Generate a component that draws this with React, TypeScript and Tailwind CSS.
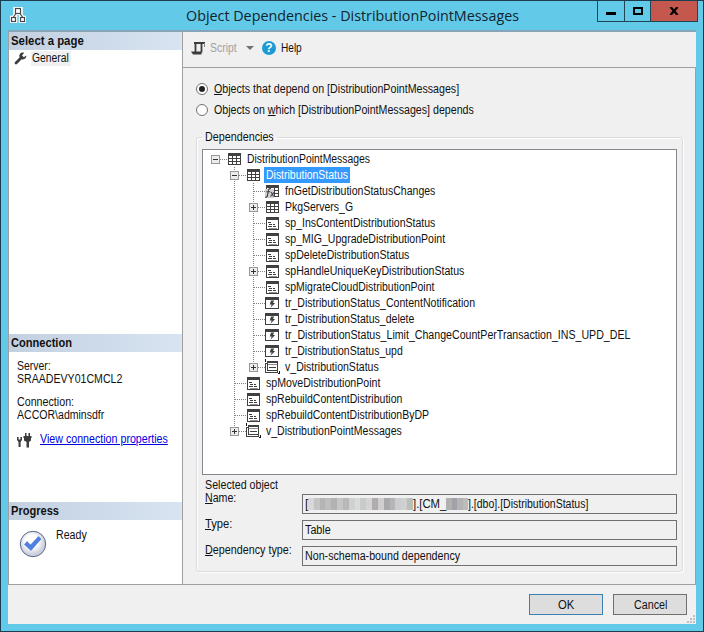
import { useLayoutEffect, useRef, useState } from 'react';
import type { ReactNode } from 'react';

type FitProps = { w: number; className?: string; children: ReactNode };

// One line of text condensed horizontally so that it fills exactly w pixels.
function Fit({ w, className = '', children }: FitProps) {
  const ref = useRef<HTMLSpanElement>(null);
  const [scale, setScale] = useState(1);
  useLayoutEffect(() => {
    const el = ref.current;
    if (el) setScale(w / el.offsetWidth);
  }, [w]);
  return (
    <span className={'flex shrink-0 whitespace-nowrap ' + className} style={{ width: w }}>
      <span ref={ref} className="block shrink-0 origin-left" style={{ transform: `scaleX(${scale})` }}>
        {children}
      </span>
    </span>
  );
}

type Kind = 'table' | 'fn' | 'proc' | 'trigger' | 'view';

function NodeIcon({ kind }: { kind: Kind }) {
  const c = '#404040';
  if (kind === 'table' || kind === 'fn') {
    return (
      <svg width="16" height="16" viewBox="0 0 16 16" className="shrink-0" shapeRendering="crispEdges">
        <rect x="1" y="2" width="13" height="12" fill={c} />
        <g fill="#fff">
          {[5, 8, 11].map((y) => [2, 6, 10].map((x) => <rect key={x + '-' + y} x={x} y={y} width="3" height="2" />))}
        </g>
        {kind === 'fn' && (
          <g shapeRendering="auto">
            <rect x="0" y="6" width="9" height="9" fill="#d0d0d0" />
            <path d="M5.800 5.600c-1.400-.5-2 .3-2.300 1.900L2.400 12.600c-.2 1.300-1 1.800-2.200 1.300M1.400 8.700h3.800M5.800 9.200c1.700 0 1.300 4.300 3.400 4.300M9.400 9.200L5.500 13.500" fill="none" stroke={c} strokeWidth="1.100" />
          </g>
        )}
      </svg>
    );
  }
  if (kind === 'proc') {
    return (
      <svg width="16" height="16" viewBox="0 0 16 16" className="shrink-0" shapeRendering="crispEdges">
        <rect x="1" y="2" width="13" height="13" fill={c} />
        <rect x="2" y="5" width="11" height="9" fill="#fff" />
        <path d="M3 7.500h3M4 9.500h3M8 9.500h2M3 11.500h4M8 11.500h3" stroke={c} />
        <path d="M4 13.500h8" stroke="#909090" />
      </svg>
    );
  }
  if (kind === 'trigger') {
    return (
      <svg width="16" height="16" viewBox="0 0 16 16" className="shrink-0" shapeRendering="crispEdges">
        <rect x="0" y="2" width="14" height="12" fill={c} />
        <rect x="1" y="5" width="12" height="8" fill="#fff" />
        <path d="M6 5.500h3.200L8 8h2.200L5.400 12.700 6.700 9.400H4.700z" fill={c} shapeRendering="auto" />
      </svg>
    );
  }
  return (
    <svg width="16" height="16" viewBox="0 0 16 16" className="shrink-0" shapeRendering="crispEdges">
      <path d="M.5 0v3M14.500 12v3M13 14.500h2" stroke="#111" />
      <rect x=".5" y="4.500" width="12" height="9" fill="#fff" stroke={c} />
      <rect x="2.500" y="2.500" width="10" height="9" fill="#fff" stroke={c} />
      <path d="M2 3.500h11M4 8.500h7" stroke={c} />
      <path d="M3 5.500h9" stroke="#8c8c8c" />
    </svg>
  );
}

type GuideProps = { up?: boolean; down?: boolean; across?: boolean; box?: '+' | '-' };

// One 19px indent column: dotted connectors and the optional expander.
function Guide({ up, down, across, box }: GuideProps) {
  return (
    <svg width="19" height="16" viewBox="0 0 19 16" className="shrink-0 overflow-visible" shapeRendering="crispEdges">
      <g stroke="#808080" strokeDasharray="1 1">
        {up && <path d="M9.500 0v8" />}
        {down && <path d="M9.500 8v8" />}
        {across && <path d="M10 8.500h11" />}
      </g>
      {box && (
        <>
          <rect x="5.500" y="4.500" width="8" height="8" fill="#ececec" stroke="#989898" />
          <path d="M7 8.500h5" stroke="#333" />
          {box === '+' && <path d="M9.500 6v5" stroke="#333" />}
        </>
      )}
    </svg>
  );
}

type Row = { name: string; w: number; kind: Kind; depth: number; box?: '+' | '-'; last?: boolean; selected?: boolean };

const rows: Row[] = [
  { name: 'DistributionPointMessages', w: 123, kind: 'table', depth: 0, box: '-', last: true },
  { name: 'DistributionStatus', w: 82, kind: 'table', depth: 1, box: '-', selected: true },
  { name: 'fnGetDistributionStatusChanges', w: 150, kind: 'fn', depth: 2 },
  { name: 'PkgServers_G', w: 68, kind: 'table', depth: 2, box: '+' },
  { name: 'sp_InsContentDistributionStatus', w: 150, kind: 'proc', depth: 2 },
  { name: 'sp_MIG_UpgradeDistributionPoint', w: 160, kind: 'proc', depth: 2 },
  { name: 'spDeleteDistributionStatus', w: 124, kind: 'proc', depth: 2 },
  { name: 'spHandleUniqueKeyDistributionStatus', w: 179, kind: 'proc', depth: 2, box: '+' },
  { name: 'spMigrateCloudDistributionPoint', w: 149, kind: 'proc', depth: 2 },
  { name: 'tr_DistributionStatus_ContentNotification', w: 190, kind: 'trigger', depth: 2 },
  { name: 'tr_DistributionStatus_delete', w: 129, kind: 'trigger', depth: 2 },
  { name: 'tr_DistributionStatus_Limit_ChangeCountPerTransaction_INS_UPD_DEL', w: 345, kind: 'trigger', depth: 2 },
  { name: 'tr_DistributionStatus_upd', w: 118, kind: 'trigger', depth: 2 },
  { name: 'v_DistributionStatus', w: 94, kind: 'view', depth: 2, box: '+', last: true },
  { name: 'spMoveDistributionPoint', w: 114, kind: 'proc', depth: 1 },
  { name: 'spRebuildContentDistribution', w: 136, kind: 'proc', depth: 1 },
  { name: 'spRebuildContentDistributionByDP', w: 163, kind: 'proc', depth: 1 },
  { name: 'v_DistributionPointMessages', w: 136, kind: 'view', depth: 1, box: '+', last: true },
];

function TreeRow({ row }: { row: Row }) {
  return (
    <div className="flex h-4 items-center">
      {row.depth > 0 && <Guide />}
      {row.depth > 1 && <Guide up={true} down={true} />}
      <Guide up={row.depth > 0} down={!row.last} across box={row.box} />
      <div className="ml-[2px] flex">
        <NodeIcon kind={row.kind} />
      </div>
      <div className={'ml-[2px] flex h-4 items-center px-[2px] ' + (row.selected ? 'bg-[#3399ff] text-white' : '')}>
        <Fit w={row.w} className="leading-4">{row.name}</Fit>
      </div>
    </div>
  );
}

function SideHeader({ title, w }: { title: string; w: number }) {
  return (
    <div className="h-[18px] shrink-0 bg-linear-to-r from-[#c3d0e0] to-[#d8e4f2] pl-[2px] font-bold leading-[18px]">
      <Fit w={w}>{title}</Fit>
    </div>
  );
}

function Radio({ checked }: { checked?: boolean }) {
  return (
    <div className="flex size-[12px] shrink-0 items-center justify-center rounded-full border border-[#707070] bg-white">
      {checked && <div className="size-[6px] rounded-full bg-[#222]" />}
    </div>
  );
}

function Field({ label, w, children }: { label: ReactNode; w: number; children: ReactNode }) {
  return (
    <div className="mb-[6px] flex h-5">
      <div className="-mt-[2px] w-[97px] leading-[13px]">
        <Fit w={w}>{label}</Fit>
      </div>
      <div className="flex h-5 w-[375px] items-center border border-[#707070] pl-[2px]">{children}</div>
    </div>
  );
}

const mosaicLong = ['#d8d8d8', '#c4c4c4', '#b4b4b6', '#bdbdbd', '#b0b2b4', '#c6c6c6', '#b8b8b8', '#d0d2d0', '#dadada', '#c8ccc8', '#d4d4d4', '#b0acb0', '#cfcfcf', '#a9a9ab', '#b5b5b5', '#cacccf', '#d0d0d0', '#b8c0b8'];
const mosaicShort = ['#b0b0b0', '#a4a2a8', '#b4b4b6', '#bcbcbc'];

function Mosaic({ colors, w }: { colors: string[]; w: number }) {
  return (
    <div className="flex h-3 shrink-0" style={{ width: w }}>
      {colors.map((c, i) => (
        <div key={i} className="flex-1" style={{ backgroundColor: c }} />
      ))}
    </div>
  );
}

export default function App() {
  return (
    <div className="flex h-[632px] w-[704px] flex-col overflow-hidden border border-[#1c3d50] bg-[#63c9e9] font-['Liberation_Sans',Arial,sans-serif] text-[12px] text-[#111]">
      <header className="flex h-[29px] shrink-0 items-start">
        <svg width="16" height="16" viewBox="0 0 16 16" className="ml-[9px] mt-[6px]">
          <g stroke="#fff" strokeWidth="3.500" fill="#fff">
            <rect x="5" y="1.500" width="6" height="5" />
            <rect x="1.500" y="10.500" width="4" height="4" />
            <rect x="10.500" y="10.500" width="4" height="4" />
            <path d="M6 6.500L3.500 10M10 6.500L12.500 10" />
          </g>
          <g stroke="#484848" strokeWidth="1.200" fill="#fff">
            <path d="M6 6.500L3.500 10M10 6.500L12.500 10" />
            <rect x="5.500" y="1.500" width="5" height="5" />
            <rect x="1.500" y="10.500" width="4" height="4" />
            <rect x="10.500" y="10.500" width="4" height="4" />
          </g>
        </svg>
        <div className="ml-[160px] mt-[4px] flex-1 font-['Open_Sans','Noto_Sans',sans-serif] text-[15px] leading-[21px] text-[#10242e]">
          <Fit w={333}>Object Dependencies - DistributionPointMessages</Fit>
        </div>
        <div className="mr-[5px] flex h-[21px] w-[101px] border border-t-0 border-[#1f4656]">
          <div className="flex w-[27px] items-center justify-center border-r border-[#1f4656] pt-1">
            <div className="h-[3px] w-[10px] bg-black" />
          </div>
          <div className="flex w-[26px] items-center justify-center border-r border-[#1f4656]">
            <div className="h-2 w-[10px] border-2 border-black" />
          </div>
          <div className="flex flex-1 items-center justify-center bg-[#c4584f]">
            <svg width="10" height="8" viewBox="0 0 10 8">
              <path d="M1.500 0L8.500 8M8.500 0L1.500 8" stroke="#000" strokeWidth="2.200" />
            </svg>
          </div>
        </div>
      </header>

      <div className="mx-[7px] flex h-[594px] shrink-0 flex-col border-t-2 border-[#86a5b8] bg-[#f0f0f0]">
        <div className="flex h-[553px] shrink-0 border-b border-[#a0a0a0]">
          <aside className="flex w-[175px] shrink-0 flex-col border-x border-[#a0a0a0] bg-white">
            <SideHeader title="Select a page" w={73} />
            <div className="flex h-[284px] items-start">
              <svg width="13" height="13" viewBox="0 0 13 13" className="ml-[5px] mt-[2px]">
                <path d="M2 11L7.500 5.500" stroke="#3c3c3c" strokeWidth="2.800" strokeLinecap="round" />
                <path d="M10.200.7A3.500 3.500 0 1 0 12.300 3.500L9.800 5.200 8 3.600z" fill="#3c3c3c" />
              </svg>
              <div className="ml-[4px] mt-px h-[15px] bg-[#f0f0f0] pl-px pr-[2px] leading-[15px]">
                <Fit w={37}>General</Fit>
              </div>
            </div>
            <SideHeader title="Connection" w={61} />
            <div className="flex h-[150px] flex-col items-start pl-2 pt-[8px] leading-[13px]">
              <Fit w={34}>Server:</Fit>
              <Fit w={105}>SRAADEVY01CMCL2</Fit>
              <Fit w={57} className="mt-[10px]">Connection:</Fit>
              <Fit w={87}>ACCOR\adminsdfr</Fit>
              <div className="mt-[9px] flex items-center">
                <svg width="15" height="15" viewBox="0 0 15 15" className="mt-[2px]">
                  <g fill="#3c3c3c">
                    <path d="M0 4h1.600v2.500h1.800V4H5v3L3.600 9v5H1.500V9L0 7z" />
                    <path d="M8 0h1.500v3h2V0H13v3h1.500v2H14v2.500L12 9v5.500H9.500V9L7 7.500V5h-.5V3H8z" />
                  </g>
                </svg>
                <Fit w={128} className="ml-2 text-[#0000e0] underline">View connection properties</Fit>
              </div>
            </div>
            <SideHeader title="Progress" w={48} />
            <div className="flex items-start pl-[10px] pt-[9px]">
              <svg width="28" height="28" viewBox="0 0 28 28" className="mt-px">
                <defs>
                  <radialGradient id="ball" cx="45%" cy="40%">
                    <stop offset="50%" stopColor="#fff" />
                    <stop offset="100%" stopColor="#cdd0de" />
                  </radialGradient>
                </defs>
                <circle cx="14" cy="14" r="12.700" fill="url(#ball)" stroke="#5c6a8e" />
                <path d="M5.500 14.500L8 11.500 11.500 15 19.500 6.500 22 9 12 20.500z" fill="#4f80e4" stroke="#3560bd" strokeWidth=".5" />
              </svg>
              <Fit w={31} className="ml-[9px] leading-[13px]">Ready</Fit>
            </div>
          </aside>

          <div className="flex flex-1 flex-col">
            <div className="flex h-[36px] shrink-0 items-center border-b border-[#a0a0a0] pb-[3px] pl-2">
              <svg width="15" height="15" viewBox="0 0 15 15">
                <path d="M3 2h11M4.500 2v9M10.500 3v8.500" fill="none" stroke="#3c3c3c" strokeWidth="1.800" />
                <path d="M0 10.500h10.500v3H2z" fill="#3c3c3c" />
                <path d="M13.500 2v4" stroke="#8a8a8a" />
              </svg>
              <Fit w={27} className="ml-[4px] text-[#a0a0a0]">Script</Fit>
              <div className="ml-[9px] border-x-4 border-t-4 border-x-transparent border-t-[#707070]" />
              <div className="ml-[8px] flex size-[14px] items-center justify-center rounded-full bg-[#1c9ad6] text-[12px] font-bold text-white">?</div>
              <Fit w={21} className="ml-[5px]">Help</Fit>
            </div>
            <div className="flex flex-1 flex-col border-r border-[#a0a0a0] pl-[13px]">
              <div className="mt-[14px] flex h-[13px] items-center">
                <Radio checked />
                <Fit w={245} className="ml-[6px]"><u>O</u>bjects that depend on [DistributionPointMessages]</Fit>
              </div>
              <div className="mt-[8px] flex h-[13px] items-center">
                <Radio />
                <Fit w={260} className="ml-[6px]">Objects on <u>w</u>hich [DistributionPointMessages] depends</Fit>
              </div>
              <fieldset className="mt-[15px] flex h-[441px] w-[487px] flex-col rounded-[3px] border border-[#dcdcdc] pl-[5px] shadow-[inset_1px_1px_0_#fff,1px_1px_0_#fff]">
                <legend className="h-[13px] px-[3px] leading-[13px]">
                  <Fit w={69}>Dependencies</Fit>
                </legend>
                <div className="mt-[5px] h-[326px] w-[475px] border border-[#828790] bg-white pl-[3px] pt-px">
                  {rows.map((row) => (
                    <TreeRow key={row.name} row={row} />
                  ))}
                </div>
                <div className="mt-[4px] pl-[3px]">
                  <div className="mb-[2px] h-[13px] leading-[13px]">
                    <Fit w={73}>Selected object</Fit>
                  </div>
                  <Field label={<><u>N</u>ame:</>} w={31}>
                    <Fit w={3}>[</Fit>
                    <Mosaic colors={mosaicLong} w={105} />
                    <Fit w={33}>].[CM_</Fit>
                    <Mosaic colors={mosaicShort} w={22} />
                    <Fit w={120}>].[dbo].[DistributionStatus]</Fit>
                  </Field>
                  <Field label={<><u>T</u>ype:</>} w={27}>
                    <Fit w={26}>Table</Fit>
                  </Field>
                  <Field label={<><u>D</u>ependency type:</>} w={87}>
                    <Fit w={155}>Non-schema-bound dependency</Fit>
                  </Field>
                </div>
              </fieldset>
            </div>
          </div>
        </div>

        <footer className="flex flex-1 items-start justify-end pt-[9px]">
          <div className="flex h-[21px] w-[74px] items-center justify-center border border-[#3c7fb1] bg-[#dddddd]">
            <Fit w={16}>OK</Fit>
          </div>
          <div className="ml-[10px] flex h-[21px] w-[74px] items-center justify-center border border-[#707070] bg-[#dddddd]">
            <Fit w={33}>Cancel</Fit>
          </div>
          <svg width="9" height="9" viewBox="0 0 9 9" className="mt-[20px]">
            <path d="M6 1h2v2H6zM3 4h2v2H3zM6 4h2v2H6zM0 7h2v2H0zM3 7h2v2H3zM6 7h2v2H6z" fill="#c0c0c0" />
          </svg>
        </footer>
      </div>
    </div>
  );
}
